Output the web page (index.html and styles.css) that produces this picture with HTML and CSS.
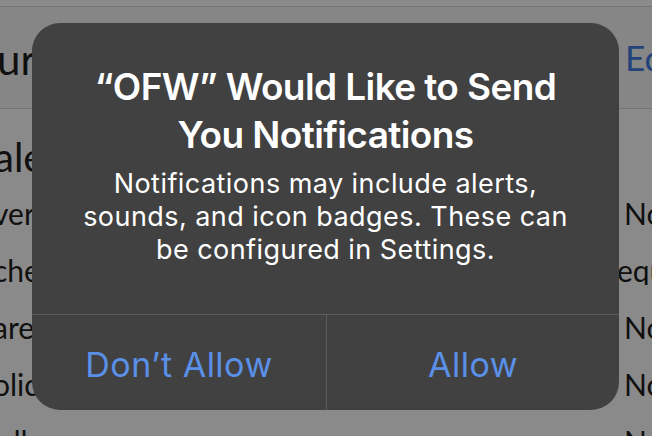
FILE: index.html
```html
<!DOCTYPE html>
<html lang="en">
<head>
<meta charset="utf-8">
<title>Notifications permission</title>
<link rel="stylesheet" href="styles.css">
</head>
<body>
<div class="screen">
  <header class="nav">
    <span class="nav-title">urnal</span>
    <span class="nav-edit">Edit</span>
  </header>
  <div class="section">ales</div>
  <ul class="rows">
    <li class="row"><span class="label">vers</span><span class="value">None</span></li>
    <li class="row"><span class="label">chedule</span><span class="value value-wide">equired</span></li>
    <li class="row"><span class="label">are</span><span class="value">None</span></li>
    <li class="row"><span class="label">olicy</span><span class="value">None</span></li>
    <li class="row"><span class="label">tdl</span><span class="value">No</span></li>
  </ul>
</div>

<div class="alert" role="alertdialog">
  <div class="alert-body">
    <h1 class="alert-title">“OFW” Would Like to Send<br>You Notifications</h1>
    <p class="alert-msg">Notifications may include alerts,<br>sounds, and icon badges. These can<br>be configured in Settings.</p>
  </div>
  <div class="alert-actions">
    <button class="alert-btn">Don’t Allow</button>
    <button class="alert-btn">Allow</button>
  </div>
</div>
</body>
</html>
```
FILE: styles.css
```css
* { box-sizing: border-box; margin: 0; padding: 0; }
html, body { width: 652px; height: 436px; overflow: hidden; }
body {
  background: #8a8a8a;
  font-family: "Lato", "Noto Sans", sans-serif;
  color: #101010;
}
.screen {
  width: 652px;
  height: 436px;
  overflow: hidden;
  padding-top: 6px;
}
.nav {
  display: grid;
  grid-template-columns: 625px 1fr;
  align-items: center;
  height: 103px;
  border-top: 1px solid #747474;
  border-bottom: 1px solid #747474;
  background: #868686;
  white-space: nowrap;
  overflow: hidden;
}
.nav-title {
  font-size: 42px;
  margin-left: -3px;
  line-height: 1;
  padding-top: 2px;
}
.nav-edit {
  font-size: 35px;
  color: #23427a;
  line-height: 1;
}
.section {
  font-size: 40px;
  margin-left: -6px;
  height: 62px;
  padding-top: 28px;
  line-height: 40px;
  white-space: nowrap;
}
.rows { list-style: none; }
.row {
  display: grid;
  grid-template-columns: 624px 1fr;
  height: 57px;
  align-items: end;
  font-size: 30px;
  line-height: 30px;
  white-space: nowrap;
  overflow: hidden;
}
.label { margin-left: -7px; }
.value-wide { margin-left: -7px; }

.alert {
  position: absolute;
  top: 23px;
  left: 32px;
  width: 587px;
  height: 387px;
  border-radius: 28px;
  background: #414141;
  overflow: hidden;
  font-family: "Inter", "Noto Sans", sans-serif;
  color: #ffffff;
  display: flex;
  flex-direction: column;
}
.alert-body {
  height: 292px;
  padding: 40px 10px 0;
  border-bottom: 1px solid #5c5c5c;
  text-align: center;
  white-space: nowrap;
}
.alert-title {
  font-size: 37px;
  font-weight: 600;
  line-height: 48px;
  letter-spacing: -0.6px;
}
.alert-msg {
  margin-top: 8px;
  font-size: 27px;
  font-weight: 400;
  line-height: 33px;
  letter-spacing: 0.45px;
}
.alert-actions {
  flex: 1;
  display: grid;
  grid-template-columns: 294px 1fr;
}
.alert-btn {
  background: transparent;
  border: 0;
  font-family: "Inter", "Noto Sans", sans-serif;
  font-size: 34px;
  font-weight: 400;
  color: #5a90e8;
  padding-top: 3px;
  letter-spacing: 0.5px;
}
.alert-btn + .alert-btn { border-left: 1px solid #5c5c5c; }
```
